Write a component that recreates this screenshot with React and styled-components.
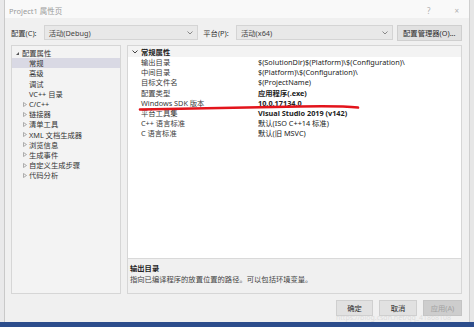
import React from "react";
import styled, { createGlobalStyle } from "styled-components";

const GlobalStyle = createGlobalStyle`
  html, body {
    margin: 0;
    padding: 0;
    background: #e4e4e4;
  }
  body {
    font-family: "Noto Sans", "Noto Sans CJK SC", sans-serif;
    font-size: 7.3px;
    color: #2a2a2a;
  }
`;

const treeItems = [
  { label: "常规", kind: "child", selected: true },
  { label: "高级", kind: "child" },
  { label: "调试", kind: "child" },
  { label: "VC++ 目录", kind: "child" },
  { label: "C/C++", kind: "group" },
  { label: "链接器", kind: "group" },
  { label: "清单工具", kind: "group" },
  { label: "XML 文档生成器", kind: "group" },
  { label: "浏览信息", kind: "group" },
  { label: "生成事件", kind: "group" },
  { label: "自定义生成步骤", kind: "group" },
  { label: "代码分析", kind: "group" },
];

const props = [
  { name: "输出目录", value: "$(SolutionDir)$(Platform)\\$(Configuration)\\" },
  { name: "中间目录", value: "$(Platform)\\$(Configuration)\\" },
  { name: "目标文件名", value: "$(ProjectName)" },
  { name: "配置类型", value: "应用程序(.exe)", bold: true },
  { name: "Windows SDK 版本", value: "10.0.17134.0", bold: true },
  { name: "平台工具集", value: "Visual Studio 2019 (v142)", bold: true },
  { name: "C++ 语言标准", value: "默认(ISO C++14 标准)" },
  { name: "C 语言标准", value: "默认(旧 MSVC)" },
];

const Chevron = ({ color = "#888" }) => (
  <svg width="6" height="4" viewBox="0 0 6 4">
    <path d="M0.5 0.5 L3 3 L5.5 0.5" fill="none" stroke={color} strokeWidth="1" />
  </svg>
);

const App = () => {
  return (
    <>
      <GlobalStyle />
      <Page>
        <Desktop>
          <LeftEdge />
          <Dialog>
            <TitleBar>
              <Title>Project1 属性页</Title>
              <TitleControls>
                <span>?</span>
                <span>×</span>
              </TitleControls>
            </TitleBar>

            <ConfigRow>
              <Label>配置(C):</Label>
              <Select $w={156}>
                <span>活动(Debug)</span>
                <Chevron />
              </Select>
              <Label>平台(P):</Label>
              <Select $w={158}>
                <span>活动(x64)</span>
                <Chevron />
              </Select>
              <Button $w={66}>配置管理器(O)...</Button>
            </ConfigRow>

            <Body>
              <Tree>
                <TreeRow>
                  <ExpandedMark />
                  <span>配置属性</span>
                </TreeRow>
                {treeItems.map((it) => (
                  <TreeRow key={it.label} $selected={it.selected} $indent={it.kind === "child" ? 17 : 11}>
                    {it.kind === "group" && (
                      <Caret width="4" height="5" viewBox="0 0 4 5">
                        <path d="M0.5 0.5 L3.5 2.5 L0.5 4.5 Z" fill="none" stroke="#9a9a9a" strokeWidth="0.8" />
                      </Caret>
                    )}
                    <span>{it.label}</span>
                  </TreeRow>
                ))}
              </Tree>

              <Props>
                <Grid>
                  <CategoryRow>
                    <CatIcon>
                      <Chevron color="#444" />
                    </CatIcon>
                    <b>常规属性</b>
                  </CategoryRow>
                  {props.map((p) => (
                    <PropRow key={p.name}>
                      <PropName>{p.name}</PropName>
                      <PropValue $bold={p.bold}>{p.value}</PropValue>
                    </PropRow>
                  ))}
                </Grid>
                <Description>
                  <DescTitle>输出目录</DescTitle>
                  <DescText>指向已编译程序的放置位置的路径。可以包括环境变量。</DescText>
                </Description>
              </Props>
            </Body>

            <Footer>
              <Button $w={37}>确定</Button>
              <Button $w={38}>取消</Button>
              <Button $w={39} $disabled>应用(A)</Button>
            </Footer>
          </Dialog>
          <RightEdge />
        </Desktop>
        <Taskbar />

        <Scribble width="474" height="327" viewBox="0 0 474 327">
          <path
            d="M140 109.5 C190 108.5 250 107.5 300 106.5 C330 106 348 106.5 358 107.5"
            fill="none"
            stroke="#e3141b"
            strokeWidth="2.6"
            strokeLinecap="round"
          />
        </Scribble>
        <Watermark>https://blog.csdn.net/qq_41868108</Watermark>
      </Page>
    </>
  );
};

const Page = styled.div`
  position: relative;
  width: 474px;
  height: 327px;
  overflow: hidden;
  display: flex;
  flex-direction: column;
`;

const Desktop = styled.div`
  display: flex;
  height: 322px;
`;

const LeftEdge = styled.div`
  width: 4px;
  background: #e9e9ea;
  border-right: 1px solid #c9c9c9;
`;

const RightEdge = styled.div`
  flex: 1;
  background: #e6e6e6;
  border-left: 1px solid #cfcfcf;
`;

const Taskbar = styled.div`
  height: 5px;
  background: #2c4d8c;
`;

const Dialog = styled.div`
  width: 464px;
  display: flex;
  flex-direction: column;
  background: #f0f0f0;
`;

const TitleBar = styled.div`
  height: 18px;
  display: flex;
  align-items: center;
  justify-content: space-between;
  padding: 0 10px 0 4px;
  background: #f9f9f9;
  color: #9a9a9a;
`;

const Title = styled.div`
  font-size: 7.5px;
  padding-top: 2px;
`;

const TitleControls = styled.div`
  display: flex;
  gap: 24px;
  font-size: 8px;
  color: #b0b0b0;
  padding-top: 2px;
`;

const ConfigRow = styled.div`
  margin-top: 7px;
  height: 15px;
  display: flex;
  align-items: center;
  padding: 0 7px 0 5px;
`;

const Label = styled.div`
  width: 33px;
  padding-left: 1px;
  white-space: nowrap;
  color: #333;
`;

const Select = styled.div`
  width: ${(p) => p.$w}px;
  height: 15px;
  box-sizing: border-box;
  display: flex;
  align-items: center;
  justify-content: space-between;
  padding: 0 4px 0 4px;
  margin-right: 4px;
  background: #e8e8e8;
  border: 1px solid #d4d4d4;
  color: #444;
`;

const Button = styled.div`
  width: ${(p) => p.$w}px;
  height: 16px;
  box-sizing: border-box;
  display: flex;
  align-items: center;
  justify-content: center;
  margin-left: auto;
  background: ${(p) => (p.$disabled ? "#cdcdcd" : "#e1e1e1")};
  border: 1px solid ${(p) => (p.$disabled ? "#c4c4c4" : "#cfcfcf")};
  color: ${(p) => (p.$disabled ? "#a2a2a2" : "#2a2a2a")};
  white-space: nowrap;
`;

const Body = styled.div`
  margin-top: 5px;
  height: 249px;
  display: flex;
  gap: 6px;
  padding: 0 7px 0 6px;
`;

const Tree = styled.div`
  width: 110px;
  box-sizing: border-box;
  padding-top: 2px;
  background: #f3f3f3;
  border: 1px solid #d6d6d6;
`;

const TreeRow = styled.div`
  height: 10.2px;
  line-height: 10.2px;
  display: flex;
  align-items: center;
  padding-left: ${(p) => p.$indent ?? 4}px;
  background: ${(p) => (p.$selected ? "#d9d9e4" : "transparent")};
  white-space: nowrap;
  color: #333;
`;

const ExpandedMark = styled.span`
  width: 0;
  height: 0;
  border-left: 3px solid transparent;
  border-bottom: 3px solid #555;
  margin-right: 3px;
  margin-top: 1px;
`;

const Caret = styled.svg`
  margin-right: 2px;
  flex: none;
`;

const Props = styled.div`
  flex: 1;
  display: flex;
  flex-direction: column;
  box-sizing: border-box;
  border: 1px solid #d6d6d6;
  background: #f0f0f0;
`;

const Grid = styled.div`
  height: 212px;
  background: #fff;
  border-bottom: 1px solid #d9d9d9;
`;

const CategoryRow = styled.div`
  height: 11px;
  display: flex;
  align-items: center;
  background: #f3f3f3;
  color: #222;
  b {
    font-weight: 700;
  }
`;

const CatIcon = styled.span`
  width: 13px;
  display: flex;
  justify-content: center;
`;

const PropRow = styled.div`
  height: 10.2px;
  line-height: 10.2px;
  display: grid;
  grid-template-columns: 117px 1fr;
  padding-left: 13px;
  white-space: nowrap;
`;

const PropName = styled.div`
  color: #3a3a3a;
`;

const PropValue = styled.div`
  color: #222;
  font-weight: ${(p) => (p.$bold ? 700 : 400)};
`;

const Description = styled.div`
  flex: 1;
  padding: 4px 0 0 2px;
  line-height: 10.5px;
`;

const DescTitle = styled.div`
  font-weight: 700;
  color: #222;
`;

const DescText = styled.div`
  color: #444;
`;

const Footer = styled.div`
  margin-top: 6px;
  display: flex;
  justify-content: flex-end;
  gap: 6px;
  padding-right: 7px;
  ${Button} {
    margin-left: 0;
  }
`;

const Scribble = styled.svg`
  position: absolute;
  left: 0;
  top: 0;
  pointer-events: none;
`;

const Watermark = styled.div`
  position: absolute;
  left: 336px;
  top: 313px;
  font-size: 7px;
  color: rgba(205, 205, 205, 0.55);
  white-space: nowrap;
`;

export default App;
